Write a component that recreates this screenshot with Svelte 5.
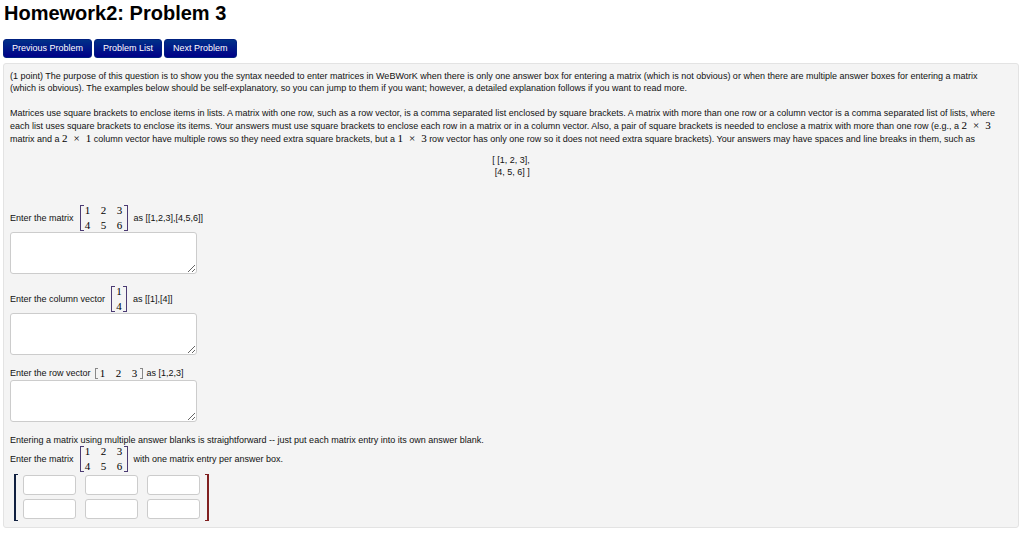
<script lang="ts">
  const matrix = [
    [1, 2, 3],
    [4, 5, 6],
  ];

  let answers = $state({ matrix: '', column: '', row: '' });
  let entries = $state([
    ['', '', ''],
    ['', '', ''],
  ]);
</script>

{#snippet math(rows: number[][])}
  <span class="math" class:single={rows.length === 1}>
    {#each rows as row}
      <span class="math-row">
        {#each row as value}<span>{value}</span>{/each}
      </span>
    {/each}
  </span>
{/snippet}

{#snippet size(rows: number, columns: number)}
  <span class="size">{rows}<span class="times">×</span>{columns}</span>
{/snippet}

<main>
  <h1>Homework2: Problem 3</h1>

  <nav>
    <a class="btn" href="#previous">Previous Problem</a>
    <a class="btn" href="#list">Problem List</a>
    <a class="btn" href="#next">Next Problem</a>
  </nav>

  <form class="problem">
    <p>
      (1 point) The purpose of this question is to show you the syntax needed to enter matrices in
      WeBWorK when there is only one answer box for entering a matrix (which is not obvious) or when
      there are multiple answer boxes for entering a matrix<br />
      (which is obvious). The examples below should be self-explanatory, so you can jump to them if
      you want; however, a detailed explanation follows if you want to read more.
    </p>

    <p class="details">
      Matrices use square brackets to enclose items in lists. A matrix with one row, such as a row
      vector, is a comma separated list enclosed by square brackets. A matrix with more than one row
      or a column vector is a comma separated list of lists, where<br />
      each list uses square brackets to enclose its items. Your answers must use square brackets to
      enclose each row in a matrix or in a column vector. Also, a pair of square brackets is needed
      to enclose a matrix with more than one row (e.g., a {@render size(2, 3)}<br />
      matrix and a {@render size(2, 1)} column vector have multiple rows so they need extra square
      brackets, but a {@render size(1, 3)} row vector has only one row so it does not need extra
      square brackets). Your answers may have spaces and line breaks in them, such as
    </p>

    <p class="sample">[ [1, 2, 3],<br />&nbsp;[4, 5, 6] ]</p>

    <div class="question">
      <label for="answer-matrix">
        Enter the matrix {@render math(matrix)} as [[1,2,3],[4,5,6]]
      </label>
      <textarea id="answer-matrix" bind:value={answers.matrix}></textarea>
    </div>

    <div class="question">
      <label for="answer-column">
        Enter the column vector {@render math([[1], [4]])} as [[1],[4]]
      </label>
      <textarea id="answer-column" bind:value={answers.column}></textarea>
    </div>

    <div class="question">
      <label for="answer-row">
        Enter the row vector {@render math([[1, 2, 3]])} as [1,2,3]
      </label>
      <textarea id="answer-row" bind:value={answers.row}></textarea>
    </div>

    <div class="question">
      <p class="note">
        Entering a matrix using multiple answer blanks is straightforward -- just put each matrix
        entry into its own answer blank.
      </p>
      <div class="label">
        Enter the matrix {@render math(matrix)} with one matrix entry per answer box.
      </div>
      <div class="blanks">
        {#each entries as row, i}
          {#each row as _, j}
            <input type="text" aria-label="Row {i + 1}, column {j + 1}" bind:value={entries[i][j]} />
          {/each}
        {/each}
      </div>
    </div>
  </form>
</main>

<style>
  :global(body) {
    margin: 0;
    background: #fff;
  }

  main {
    padding: 2px 5px 10px 3px;
    color: #111;
    font: 9px/12px 'Liberation Sans', Arial, sans-serif;
  }

  h1 {
    margin: 0 1px 14px;
    color: #000;
    font-size: 20px;
    line-height: 23px;
  }

  nav {
    display: flex;
    gap: 2px;
    margin-bottom: 5px;
  }

  .btn {
    padding: 3px 8px;
    border: 1px solid #002080;
    border-radius: 3px;
    background: linear-gradient(#003088, #000088);
    color: #fff;
    line-height: 11px;
    text-decoration: none;
  }

  .problem {
    padding: 6px;
    border: 1px solid #e3e3e3;
    border-radius: 3px;
    background: #f4f4f4;
  }

  p {
    margin: 0 0 13px;
  }

  .details {
    margin-bottom: 8px;
    line-height: 13px;
  }

  .size {
    color: #000;
    font-family: 'Liberation Serif', serif;
    font-size: 11px;
    line-height: 11px;
    white-space: nowrap;
  }

  .times {
    margin: 0 6px;
  }

  .sample {
    margin-bottom: 27px;
    text-align: center;
  }

  .question {
    margin-bottom: 12px;
  }

  .question:last-child {
    margin-bottom: 0;
  }

  label,
  .label {
    display: flex;
    align-items: center;
    gap: 6px;
    margin-bottom: 1px;
  }

  .math {
    display: flex;
    flex-direction: column;
    gap: 4px;
    position: relative;
    padding: 0 4px;
    color: #000;
    font: 11px/11px 'Liberation Serif', serif;
  }

  .single {
    margin: 0 -2px;
  }

  .math::before,
  .math::after,
  .blanks::before,
  .blanks::after {
    content: '';
    position: absolute;
    top: 0;
    bottom: 0;
    box-sizing: border-box;
    width: 4px;
    border: 1px solid #4b3b73;
  }

  .math.single::before,
  .math.single::after {
    width: 3px;
    border-color: #888;
  }

  .math::before,
  .blanks::before {
    left: 0;
    border-right: 0;
  }

  .math::after,
  .blanks::after {
    right: 0;
    border-left: 0;
  }

  .math-row {
    display: flex;
    gap: 8px;
  }

  .math-row span {
    width: 8px;
    text-align: center;
  }

  textarea,
  input {
    display: block;
    box-sizing: border-box;
    margin: 0;
    border: 1px solid #ccc;
    border-radius: 3px;
    background: #fff;
    font: inherit;
  }

  textarea {
    width: 187px;
    height: 42px;
    padding: 3px;
  }

  .note {
    margin: 0;
  }

  .blanks {
    display: grid;
    grid-template-columns: repeat(3, 53px);
    gap: 4px 9px;
    position: relative;
    width: max-content;
    margin: 2px 0 0 4px;
    padding: 1px 9px 2px;
  }

  .blanks::before {
    border-color: #102040;
    border-left-width: 2px;
  }

  .blanks::after {
    border-color: #802020;
    border-right-width: 2px;
  }

  input {
    width: 53px;
    height: 20px;
    padding: 2px 3px;
  }
</style>
